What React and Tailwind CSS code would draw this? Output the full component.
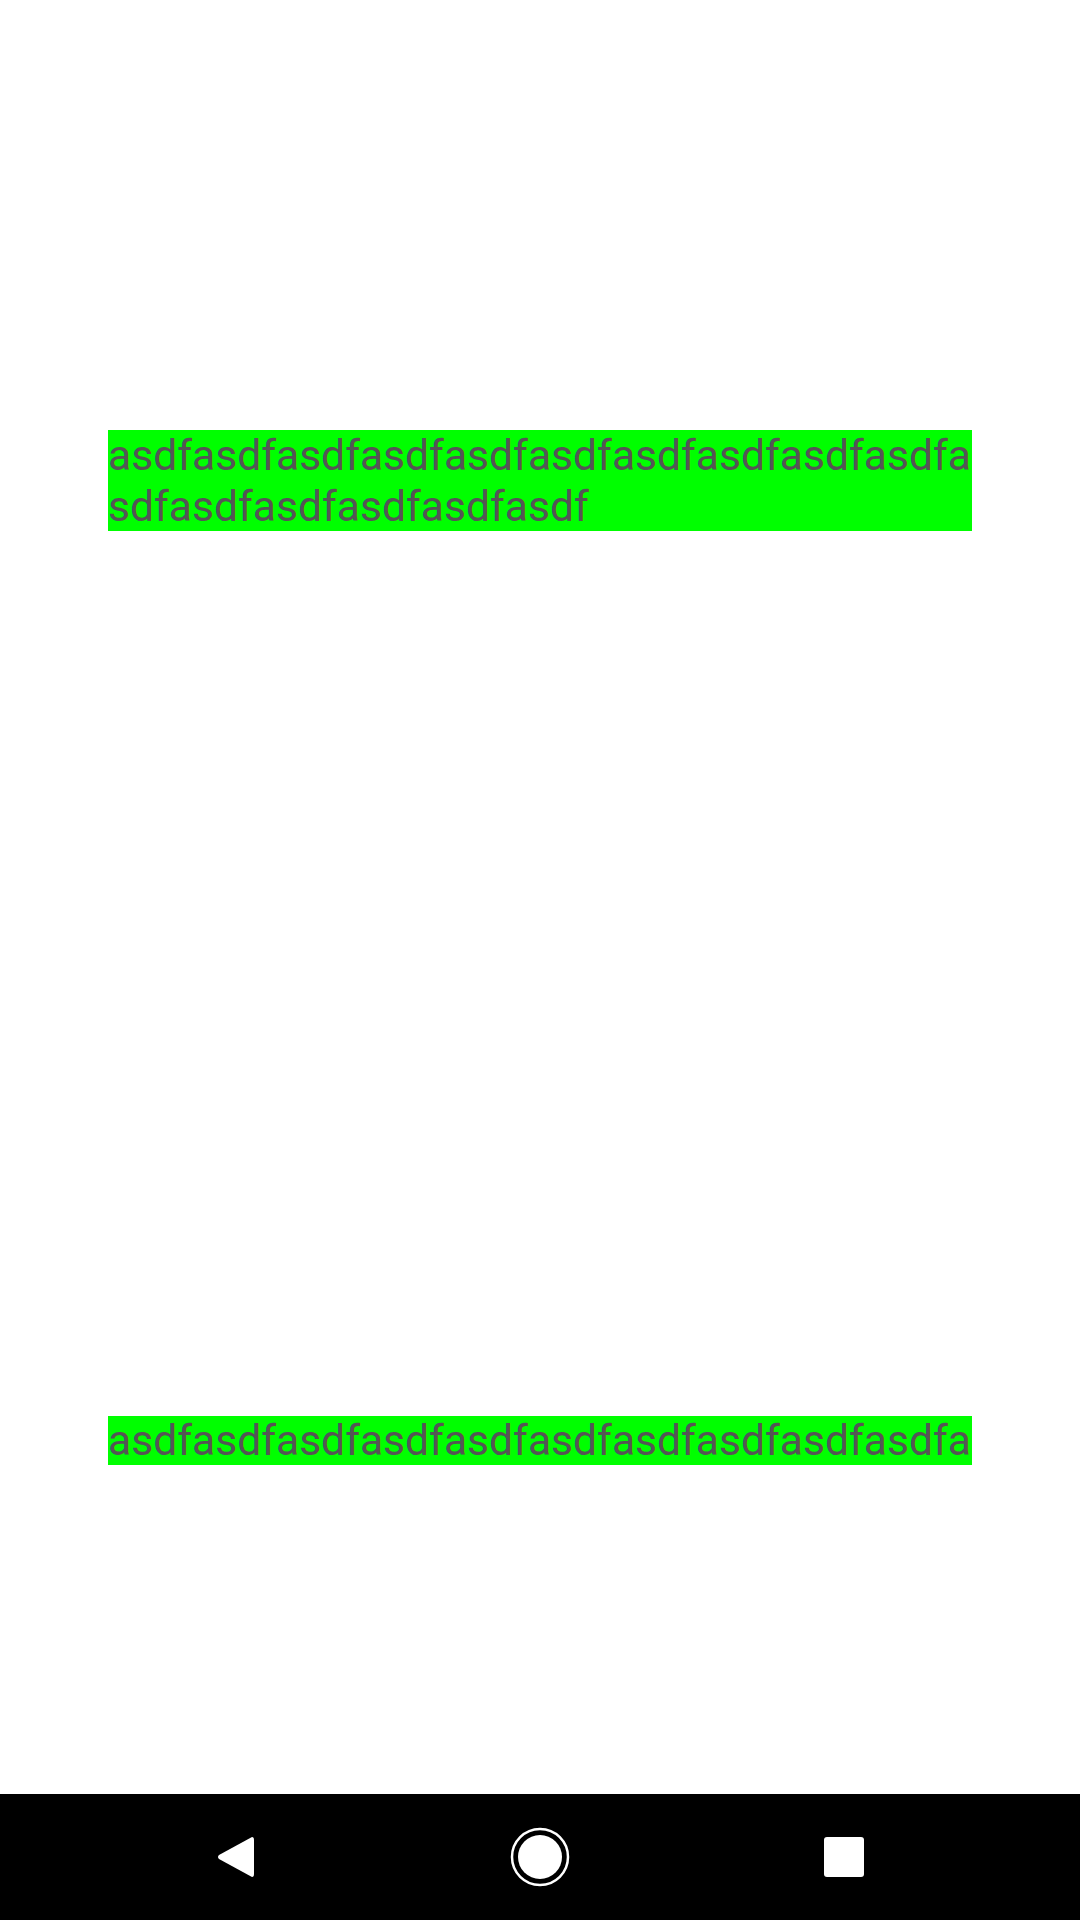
import React from 'react';

const TEXT = 'asdf'.repeat(16);
const LINE = 'asdf'.repeat(10) + 'a';

export default function App() {
  return (
    <div className="flex h-[1920px] w-[1080px] flex-col bg-white font-['Roboto',sans-serif]">
      {/* content */}
      <div className="flex flex-1 flex-col items-center">
        <div className="mt-[430px] w-[864px] bg-[#00ff00] text-[42.6px] leading-[50.5px] text-[#555555] break-all">
          {TEXT}
        </div>
        <div className="mt-[885px] h-[49px] w-[864px] overflow-hidden bg-[#00ff00] text-[42.6px] leading-[49px] text-[#555555] whitespace-nowrap">
          {LINE}
        </div>
      </div>

      {/* nav bar */}
      <div className="flex h-[126px] items-center bg-black">
        <div className="flex w-[472px] justify-center">
          <svg width="40" height="46" viewBox="0 0 40 46">
            <path d="M36 3 Q38 3 38 6 L38 40 Q38 43 36 43 L3 25 Q1 23 3 21 Z" fill="white" />
          </svg>
        </div>
        <div className="flex w-[136px] justify-center">
          <svg width="60" height="60" viewBox="0 0 60 60">
            <circle cx="30" cy="30" r="28" fill="none" stroke="white" strokeWidth="2.5" />
            <circle cx="30" cy="30" r="22" fill="white" />
          </svg>
        </div>
        <div className="flex w-[472px] justify-center">
          <div className="h-[40px] w-[40px] rounded-[3px] bg-white" />
        </div>
      </div>
    </div>
  );
}
